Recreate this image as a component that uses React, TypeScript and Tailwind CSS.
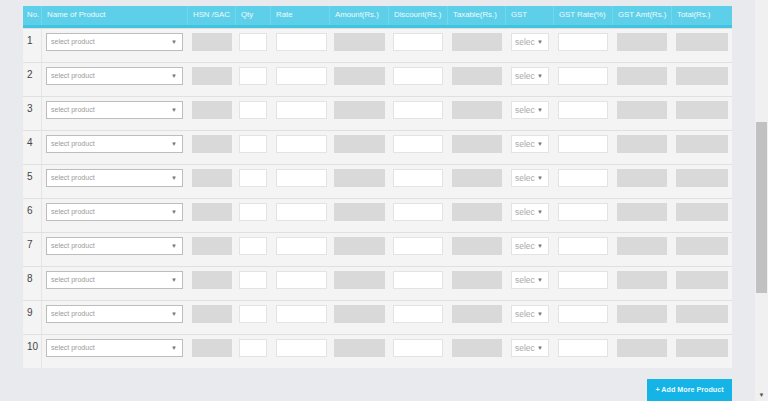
import React from 'react';

const font = { fontFamily: '"Liberation Sans", Arial, sans-serif' };

const columns = [
  { label: 'No.', width: 'w-[19px]' },
  { label: 'Name of Product', width: 'w-[146px]' },
  { label: 'HSN /SAC', width: 'w-[48px]' },
  { label: 'Qty', width: 'w-[35px]' },
  { label: 'Rate', width: 'w-[59px]' },
  { label: 'Amount(Rs.)', width: 'w-[59px]' },
  { label: 'Discount(Rs.)', width: 'w-[59px]' },
  { label: 'Taxable(Rs.)', width: 'w-[58px]' },
  { label: 'GST', width: 'w-[48px]' },
  { label: 'GST Rate(%)', width: 'w-[59px]' },
  { label: 'GST Amt(Rs.)', width: 'w-[59px]' },
  { label: 'Total(Rs.)', width: 'w-[60px]' },
];

function Caret() {
  return <span className="text-[6px] leading-none text-[#777]">▼</span>;
}

function GrayBox({ className }: { className: string }) {
  return <div className={`h-[18px] bg-[#d9d9d9] ${className}`} />;
}

function WhiteBox({ className }: { className: string }) {
  return <div className={`h-[18px] bg-white border border-[#e3e3e3] ${className}`} />;
}

function ProductRow({ n }: { n: number }) {
  return (
    <div className="flex h-[34px] border-t border-[#e0e0e0] bg-[#f4f4f4]">
      <div className="w-[19px] shrink-0 border-r border-[#e6e6e6] pl-[4px] pt-[5px] text-[10px] leading-[14px] text-[#444]">
        {n}
      </div>
      <div className="w-[146px] shrink-0 pl-[4px] pt-[4px]">
        <div className="flex h-[18px] w-[137px] items-center justify-between border border-[#bdbdbd] bg-white pl-[4px] pr-[5px]">
          <span className="text-[7px] text-[#9a9a9a]">select product</span>
          <Caret />
        </div>
      </div>
      <div className="w-[48px] shrink-0 pl-[4px] pt-[4px]">
        <GrayBox className="w-[40px]" />
      </div>
      <div className="w-[35px] shrink-0 pl-[3px] pt-[4px]">
        <WhiteBox className="w-[28px]" />
      </div>
      <div className="w-[59px] shrink-0 pl-[5px] pt-[4px]">
        <WhiteBox className="w-[51px]" />
      </div>
      <div className="w-[59px] shrink-0 pl-[4px] pt-[4px]">
        <GrayBox className="w-[51px]" />
      </div>
      <div className="w-[59px] shrink-0 pl-[4px] pt-[4px]">
        <WhiteBox className="w-[50px]" />
      </div>
      <div className="w-[58px] shrink-0 pl-[4px] pt-[4px]">
        <GrayBox className="w-[50px]" />
      </div>
      <div className="w-[48px] shrink-0 pl-[5px] pt-[4px]">
        <div className="flex h-[18px] w-[38px] items-center justify-between border border-[#e3e3e3] bg-white pl-[3px] pr-[5px]">
          <span className="whitespace-nowrap text-[8.5px] text-[#aaa]">selec</span>
          <Caret />
        </div>
      </div>
      <div className="w-[59px] shrink-0 pl-[4px] pt-[4px]">
        <WhiteBox className="w-[50px]" />
      </div>
      <div className="w-[59px] shrink-0 pl-[4px] pt-[4px]">
        <GrayBox className="w-[50px]" />
      </div>
      <div className="w-[60px] shrink-0 pl-[4px] pt-[4px]">
        <GrayBox className="w-[52px]" />
      </div>
    </div>
  );
}

export default function App() {
  const rows = [1, 2, 3, 4, 5, 6, 7, 8, 9, 10];

  return (
    <div className="flex h-[401px] w-[768px] overflow-hidden bg-[#e9eaee]" style={font}>
      <div className="flex-1 pl-[23px] pt-[6px]">
        <div className="w-[709px]">
          <div className="flex h-[22px] border-b-[3px] border-[#41c4e0] bg-[#5dcfe8]">
            {columns.map((c, i) => (
              <div
                key={c.label}
                className={`${c.width} shrink-0 ${i === 0 ? 'pl-[4px]' : 'pl-[5px]'} ${
                  i < columns.length - 1 ? 'border-r border-[#72d7ec]' : ''
                } whitespace-nowrap pt-[3px] text-[7.8px] leading-[12px] text-white/90`}
              >
                {c.label}
              </div>
            ))}
          </div>
          {rows.map((n) => (
            <ProductRow key={n} n={n} />
          ))}
        </div>
        <div className="flex w-[709px] justify-end pt-[11px]">
          <button className="h-[22px] w-[85px] whitespace-nowrap bg-[#14b4e6] text-[7.2px] font-bold text-white/95">
            + Add More Product
          </button>
        </div>
      </div>
      <div className="flex w-[13px] shrink-0 flex-col bg-[#f0f0f1]">
        <div className="mx-[1px] mt-[122px] h-[171px] bg-[#c1c1c1]" />
        <div className="flex-1" />
        <div className="flex h-[12px] items-center justify-center text-[6px] text-[#505050]">▼</div>
      </div>
    </div>
  );
}
